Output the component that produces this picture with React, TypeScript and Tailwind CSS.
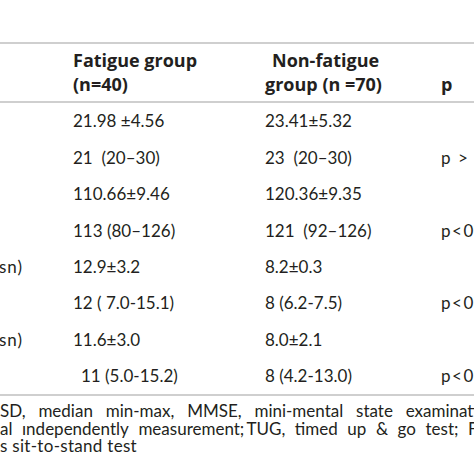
import React from "react";

const rows: { label: string; a: string; b: string; p: string; aPad?: boolean }[] = [
  { label: "BMI (kg/m2)", a: "21.98 ±4.56", b: "23.41±5.32", p: "" },
  { label: "MMSE", a: "21\u00a0 (20–30)", b: "23\u00a0 (20–30)", p: "p >\u00a0\u00a0 0.05" },
  { label: "FIM", a: "110.66±9.46", b: "120.36±9.35", p: "" },
  { label: "FIM", a: "113 (80–126)", b: "121\u00a0 (92–126)", p: "p<0.001" },
  { label: "TUG (sn)", a: "12.9±3.2", b: "8.2±0.3", p: "" },
  { label: "TUG", a: "12 ( 7.0-15.1)", b: "8 (6.2-7.5)", p: "p<0.001" },
  { label: "FTSTS (sn)", a: "11.6±3.0", b: "8.0±2.1", p: "" },
  { label: "FTSTS", a: "11 (5.0-15.2)", b: "8 (4.2-13.0)", p: "p<0.001", aPad: true },
];

function Label({ text }: { text: string }) {
  const show = text.endsWith("(sn)");
  return (
    <div className="w-[73px] shrink-0 overflow-hidden flex justify-end pr-[50px] whitespace-nowrap tracking-[1px]">
      {show ? <span>{text}</span> : null}
    </div>
  );
}

export default function App() {
  return (
    <div
      className="w-[474px] h-[474px] overflow-hidden bg-white text-[#231f20] text-[17px]"
      style={{ fontFamily: "Lato, 'Open Sans', sans-serif" }}
    >
      <div className="h-[42px]" />
      <div
        className="border-t-2 border-b-2 border-[#cfcfcf] flex items-end pt-[4px] pb-[5px] leading-[24px] font-bold text-[18px] whitespace-nowrap"
        style={{ fontFamily: "'Open Sans', Lato, sans-serif" }}
      >
        <div className="w-[73px] shrink-0" />
        <div className="w-[192px] shrink-0">
          <div>Fatigue group</div>
          <div>(n=40)</div>
        </div>
        <div className="w-[176px] shrink-0">
          <div className="pl-[7px]">Non-fatigue</div>
          <div>group (n =70)</div>
        </div>
        <div className="flex-1">p</div>
      </div>
      <div className="border-b-2 border-[#cfcfcf]">
        {rows.map((r, i) => (
          <div key={i} className="h-[36.4px] flex items-center whitespace-nowrap">
            <Label text={r.label} />
            <div className={"w-[192px] shrink-0 " + (r.aPad ? "pl-[8px]" : "")}>{r.a}</div>
            <div className="w-[176px] shrink-0">{r.b}</div>
            <div className="flex-1 overflow-hidden tracking-[1.5px]">{r.p}</div>
          </div>
        ))}
      </div>
      <div className="pt-[6px] leading-[17.5px] whitespace-nowrap overflow-hidden">
        <div className="w-[497px] flex justify-between">
          {["SD,", "median", "min-max,", "MMSE,", "mini-mental", "state", "examination"].map((w, i) => (
            <span key={i}>{w}</span>
          ))}
        </div>
        <div className="w-[520px] flex justify-between">
          {["al", "ındependently", "measurement;\u2009TUG,", "timed", "up", "&", "go", "test;", "FTSTS,"].map((w, i) => (
            <span key={i}>{w}</span>
          ))}
        </div>
        <div className="tracking-[0.3px]">s sit-to-stand test</div>
      </div>
    </div>
  );
}
